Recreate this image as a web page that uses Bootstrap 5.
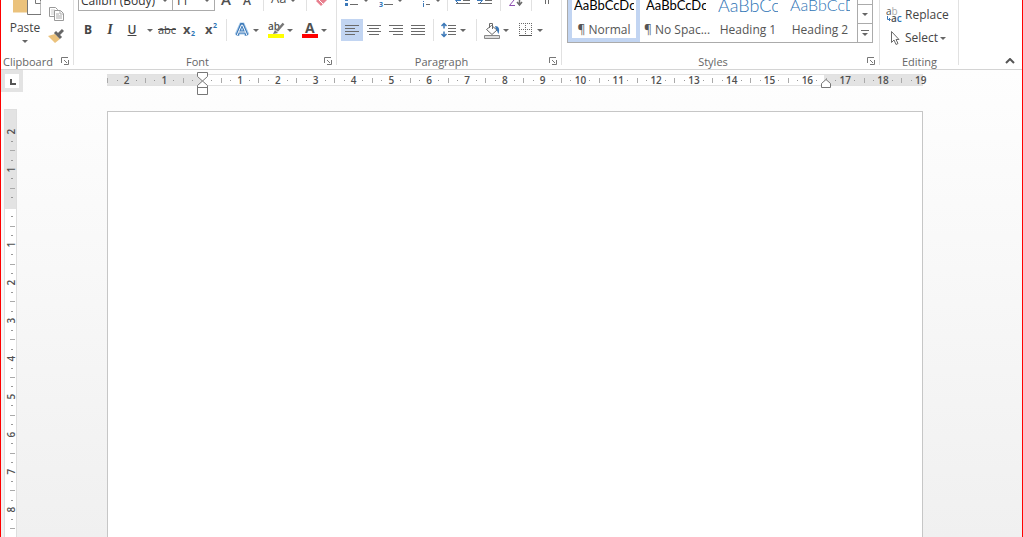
<!DOCTYPE html>
<html lang="en">
<head>
<meta charset="utf-8">
<meta name="viewport" content="width=device-width, initial-scale=1">
<title>Document editor</title>
<link href="https://cdn.jsdelivr.net/npm/bootstrap@5.3.0/dist/css/bootstrap.min.css" rel="stylesheet">
<style>
  body { font: 12px/16px "Open Sans", "Noto Sans", sans-serif; color: #444; border: solid #f00; border-width: 0 1px; overflow: hidden; }
  button, select { font: inherit; color: inherit; }
  svg { display: block; flex: none; fill: none; stroke: #6a6a6a; }
  svg text { stroke: none; fill: #505050; font-family: "Open Sans", sans-serif; }
  .ribbon { height: 70px; border-bottom: 1px solid #d4d4d4; }
  .ribbon-group { height: 69px; flex: none; position: relative; }
  .ribbon-group::after { content: ""; position: absolute; right: 0; top: 0; height: 65px; width: 1px; background: #e1e1e1; }
  .group-label { margin-top: 12px; height: 16px; color: #666; font-size: 11px; line-height: 17px; }
  .launcher { position: absolute; right: 5px; bottom: 4px; }
  .g-clipboard { width: 73px; } .g-font { width: 263px; } .g-paragraph { width: 225px; }
  .g-styles { width: 318px; } .g-editing { width: 79px; }
  .tool-row { height: 22px; padding-left: 4px; }
  .g-font .tool-row + .tool-row { padding-left: 3px; }
  .tool-row + .tool-row { margin-top: 8px; }
  .paste-btn { width: 40px; }
  .g-clipboard .group-label { margin-top: 6px; padding-left: 2px; }
  .tool { border: 0; background: none; padding: 0; height: 22px; width: 22px; display: flex; align-items: center; justify-content: center; flex: none; }
  .tool.active { background: #c2d5f2; }
  .italic-tool { font: italic bold 14px "Liberation Serif", serif; }
  .strike-tool { font-size: 11px; }
  .drop { width: 12px; justify-content: flex-start; }
  .drop.wide { width: 13px; justify-content: center; }
  .vsep { width: 1px; height: 22px; background: #e1e1e1; flex: none; margin: 0 4px; }
  .combo { appearance: none; border: 1px solid #ababab; border-radius: 0; height: 22px; padding: 1px 2px 0; color: #333; flex: none;
    background: #fff url("data:image/svg+xml,%3Csvg xmlns='http://www.w3.org/2000/svg' width='6' height='3'%3E%3Cpath d='M0 0h6L3 3z' fill='%23666'/%3E%3C/svg%3E") no-repeat right 4px center; }
  .combo-face { width: 95px; } .combo-size { width: 43px; margin-left: -1px; }
  .gallery { height: 54px; border: 1px solid #ababab; border-top: 0; margin: 0 7px 0 5px; }
  .gallery + .group-label { margin-top: 10px; }
  .style-tile { width: 72px; height: 53px; border: 4px solid transparent; background: none; padding: 2px 0 0; color: #555; white-space: nowrap; }
  .style-tile.active { border-color: #c2d5f2; }
  .sample { font-family: Lato, sans-serif; font-size: 13px; line-height: 20px; width: 60px; margin: 0 auto 7px; overflow: hidden; color: #000; text-align: left; }
  .sample.h1-look { font-size: 18px; font-weight: 300; color: #2e74b5; }
  .sample.h2-look { font-size: 16px; font-weight: 300; color: #2e74b5; }
  .gallery-nav { width: 15px; border-left: 1px solid #ababab; }
  .gallery-nav button { width: 14px; height: 19px; }
  .gallery-nav button + button { border-top: 1px solid #ababab; }
  .edit-tool { border: 0; background: none; height: 22px; margin-bottom: 1px; padding: 0 0 0 6px; display: flex; align-items: center; gap: 2px; }
  .edit-list + .group-label { margin-top: 3px; }
  .workspace { background: linear-gradient(#fefefe, #f0f0f0); min-height: 0; }
  .ruler-bar { height: 39px; }
  .tab-kind { width: 22px; height: 22px; background: #e3e3e3; padding: 4px; border: 0; flex: none; }
  .ruler-wrap { padding: 4px 15px 0 0; }
  .h-ruler { width: 816px; height: 12px; position: relative; border: solid #e1e1e1; border-width: 1px 0; background: linear-gradient(to right, #e3e3e3 95px, #fff 95px 717px, #e3e3e3 717px); }
  .scale { display: grid; font-size: 10px; line-height: 10px; font-weight: 600; color: #505050; }
  .scale > * { display: flex; align-items: center; justify-content: center; min-width: 0; min-height: 0; }
  .h-scale { width: 832px; height: 10px; margin-left: -4px; grid-template-columns: repeat(88, 1fr); }
  .h-scale .bar::before { content: ""; width: 1px; height: 5px; background: #aaa; }
  .dot::before { content: ""; width: 1px; height: 1px; background: #999; }
  .v-ruler { width: 13px; margin-left: 3px; border: solid #dedede; border-width: 1px 1px 0; background: linear-gradient(#e3e3e3 99px, #fff 99px); overflow: hidden; flex: none; padding-top: 17px; }
  .v-scale { height: 416px; width: 11px; grid-template-rows: repeat(44, 1fr); }
  .v-scale .bar::before { content: ""; height: 1px; width: 5px; background: #aaa; }
  .v-scale .dot::before { width: 2px; }
  .v-scale .bar, .v-scale .dot { padding-left: 3px; }
  .v-scale .num { writing-mode: vertical-rl; transform: rotate(180deg); }
  .marker { position: absolute; }
  .marker-left { left: 90px; top: -3px; }
  .marker-right { left: 714px; top: 4px; }
  .page-wrap { padding: 2px 9px 0 0; }
  .paper { width: 816px; background: #fff; border: 1px solid #c6c6c6; border-bottom: 0; outline: 0; }
  .collapse-btn { width: 22px; height: 16px; margin-right: 1px; }
</style>
</head>
<body class="vh-100 d-flex flex-column">

<header class="ribbon d-flex bg-white overflow-hidden flex-shrink-0">
  <section class="ribbon-group g-clipboard d-flex flex-column justify-content-end" aria-label="Clipboard">
    <div class="d-flex">
      <button class="paste-btn border-0 bg-transparent p-0 d-flex flex-column align-items-center justify-content-end ms-1">
        <svg width="32" height="16" viewBox="0 0 32 16"><path d="M4-8h14v20.500H4z" fill="#ebc27c" stroke="none"/><path d="M18.500-4.500h8l5.500 5.500v13.500h-13.500z" fill="#fff" stroke="#777"/><path d="M26.500-5v8.500h5" stroke="#777"/></svg>
        <span class="mt-1">Paste</span>
        <svg class="mt-1 mb-1" width="6" height="3"><path d="M0 0h6L3 3z" fill="#666" stroke="none"/></svg>
      </button>
      <div class="d-flex flex-column justify-content-end">
        <button class="tool" aria-label="Copy"><svg width="16" height="16"><path d="M1.500 1.500h6l2 2v7h-8z" fill="#fff" stroke="#999"/><path d="M3 4h4M3 6h4M3 8h4" stroke="#ccc"/><path d="M6.500 4.500h6l3 3v7h-9z" fill="#fff" stroke="#999"/><path d="M12 5v3h3M8 8h3M8 10h6M8 12h6" stroke="#aaa"/></svg></button>
        <button class="tool" aria-label="Format Painter"><svg width="16" height="16"><path d="M0 8l7-2 5 5-5 4z" fill="#ebc27c" stroke="none"/><path d="M7 4l6 6M10 7l5-5" stroke="#666" stroke-width="3"/></svg></button>
      </div>
    </div>
    <div class="group-label">Clipboard</div>
    <button class="launcher border-0 bg-transparent p-0" aria-label="Clipboard settings"><svg width="8" height="8"><path d="M.5 6V.5H7M3 3l3 3M7.500 3v4.500H3" stroke="#777"/></svg></button>
  </section>

  <section class="ribbon-group g-font d-flex flex-column justify-content-end" aria-label="Font">
    <div class="tool-row d-flex">
      <select class="combo combo-face" aria-label="Font"><option>Calibri (Body)</option></select>
      <select class="combo combo-size" aria-label="Font size"><option>11</option></select>
      <button class="tool" aria-label="Grow Font"><svg width="16" height="22"><text x="3" y="16" font-size="15" font-weight="600">A</text></svg></button>
      <button class="tool" aria-label="Shrink Font"><svg width="16" height="22"><text x="3" y="16" font-size="12" font-weight="600">A</text></svg></button>
      <i class="vsep"></i>
      <button class="tool" aria-label="Change Case"><svg width="20" height="22"><text x="2" y="14" font-size="13">Aa</text></svg></button>
      <button class="tool drop" aria-label="Case options"><svg width="6" height="3"><path d="M0 0h6L3 3z" fill="#666" stroke="none"/></svg></button>
      <i class="vsep"></i>
      <button class="tool" aria-label="Clear Formatting"><svg width="18" height="22"><path d="M3 12L11 4l5 5-8 8z" fill="#e8808f" stroke="none"/><path d="M5 10l6 6" stroke="#fff"/></svg></button>
    </div>
    <div class="tool-row d-flex">
      <button class="tool fw-bold" aria-label="Bold">B</button>
      <button class="tool italic-tool" aria-label="Italic">I</button>
      <button class="tool fw-semibold text-decoration-underline" aria-label="Underline">U</button>
      <button class="tool drop wide" aria-label="Underline styles"><svg width="6" height="3"><path d="M0 0h6L3 3z" fill="#666" stroke="none"/></svg></button>
      <button class="tool strike-tool text-decoration-line-through" aria-label="Strikethrough">abc</button>
      <button class="tool" aria-label="Subscript"><svg width="16" height="16"><text x="2" y="12" font-size="13" font-weight="700">x</text><text x="10" y="14" font-size="7" font-weight="700" style="fill:#2e74b5">2</text></svg></button>
      <button class="tool" aria-label="Superscript"><svg width="16" height="16"><text x="2" y="12" font-size="13" font-weight="700">x</text><text x="10" y="6" font-size="7" font-weight="700" style="fill:#2e74b5">2</text></svg></button>
      <i class="vsep"></i>
      <button class="tool" aria-label="Text Effects"><svg width="16" height="16"><path d="M3 13L7.500 3h1L13 13M5 10h6" stroke="#a9cbea" stroke-width="5"/><path d="M3 13.500L7.500 2.500h1L13 13.500M5 10h6" stroke="#3b78b8" stroke-width="3"/><path d="M3 13.500L7.500 3h1L13 13.500M5 10h6" stroke="#fff"/></svg></button>
      <button class="tool drop" aria-label="Effect options"><svg width="6" height="3"><path d="M0 0h6L3 3z" fill="#666" stroke="none"/></svg></button>
      <button class="tool" aria-label="Highlight Color"><svg width="17" height="18"><text x="0" y="9" font-size="10" font-weight="600">ab</text><path d="M15.500 2.500L9 10" stroke="#777" stroke-width="2.500"/><path d="M5 13l2-4 3 3z" fill="#777" stroke="none"/><path d="M0 13h16v4H0z" fill="#ff0" stroke="none"/></svg></button>
      <button class="tool drop" aria-label="Highlight options"><svg width="6" height="3"><path d="M0 0h6L3 3z" fill="#666" stroke="none"/></svg></button>
      <button class="tool" aria-label="Font Color"><svg width="16" height="18"><text x="3" y="12" font-size="14" font-weight="700">A</text><path d="M0 13h16v4H0z" fill="#f00" stroke="none"/></svg></button>
      <button class="tool drop" aria-label="Color options"><svg width="6" height="3"><path d="M0 0h6L3 3z" fill="#666" stroke="none"/></svg></button>
    </div>
    <div class="group-label text-center pe-3">Font</div>
    <button class="launcher border-0 bg-transparent p-0" aria-label="Font settings"><svg width="8" height="8"><path d="M.5 6V.5H7M3 3l3 3M7.500 3v4.500H3" stroke="#777"/></svg></button>
  </section>

  <section class="ribbon-group g-paragraph d-flex flex-column justify-content-end" aria-label="Paragraph">
    <div class="tool-row d-flex">
      <button class="tool" aria-label="Bullets"><svg width="14" height="22"><path d="M0 15.500h3M0 10.500h3" stroke="#3b78b8" stroke-width="3"/><path d="M5 15.500h8M5 10.500h8"/></svg></button>
      <button class="tool drop" aria-label="Bullet options"><svg width="6" height="3"><path d="M0 0h6L3 3z" fill="#666" stroke="none"/></svg></button>
      <button class="tool" aria-label="Numbering"><svg width="14" height="22"><text x="0" y="18" font-size="7" font-weight="700" style="fill:#2e74b5">3</text><path d="M5 15.500h9M5 10.500h9"/></svg></button>
      <button class="tool drop me-1" aria-label="Numbering options"><svg width="6" height="3"><path d="M0 0h6L3 3z" fill="#666" stroke="none"/></svg></button>
      <button class="tool" aria-label="Multilevel List"><svg width="14" height="22"><path d="M6.500 12v1M6.500 14v4" stroke="#3b78b8"/><path d="M9 15.500h4M4 10.500h8"/></svg></button>
      <button class="tool drop" aria-label="List options"><svg width="6" height="3"><path d="M0 0h6L3 3z" fill="#666" stroke="none"/></svg></button>
      <i class="vsep ms-0"></i>
      <button class="tool" aria-label="Decrease Indent"><svg width="16" height="22"><path d="M1 14.500h14M8 11.500h7"/><path d="M6 11.500H1M3 9l-2.500 2.500L3 14" stroke="#3b78b8"/></svg></button>
      <button class="tool" aria-label="Increase Indent"><svg width="16" height="22"><path d="M1 14.500h14M8 11.500h7"/><path d="M0 11.500h5M3 9l2.500 2.500L3 14" stroke="#3b78b8"/></svg></button>
      <i class="vsep"></i>
      <button class="tool" aria-label="Sort"><svg width="16" height="22"><path d="M6 11L1.500 16.500H7" stroke="#8e4fb0"/><path d="M11.500 4v12M9 13l2.500 3 2.500-3" stroke-width="1.500"/></svg></button>
      <i class="vsep"></i>
      <button class="tool" aria-label="Show formatting marks"><svg width="12" height="22"><path d="M4.500 6v9M7.500 6v9"/></svg></button>
    </div>
    <div class="tool-row d-flex">
      <button class="tool active" aria-label="Align Left"><svg width="14" height="12"><path d="M0 1.500h14M0 4.500h10M0 7.500h14M0 10.500h10"/></svg></button>
      <button class="tool" aria-label="Center"><svg width="14" height="12"><path d="M0 1.500h14M2 4.500h10M0 7.500h14M2 10.500h10"/></svg></button>
      <button class="tool" aria-label="Align Right"><svg width="14" height="12"><path d="M0 1.500h14M4 4.500h10M0 7.500h14M4 10.500h10"/></svg></button>
      <button class="tool" aria-label="Justify"><svg width="14" height="12"><path d="M0 1.500h14M0 4.500h14M0 7.500h14M0 10.500h14"/></svg></button>
      <i class="vsep"></i>
      <button class="tool" aria-label="Line Spacing"><svg width="16" height="16"><path d="M7 3.500h8M7 6.500h8M7 9.500h8M7 12.500h8"/><path d="M3 1v5.500M3 9.500V15M.5 4L3 1.500 5.500 4M.5 12L3 14.500 5.500 12" stroke="#3b78b8" stroke-width="1.500"/></svg></button>
      <button class="tool drop" aria-label="Spacing options"><svg width="6" height="3"><path d="M0 0h6L3 3z" fill="#666" stroke="none"/></svg></button>
      <i class="vsep"></i>
      <button class="tool" aria-label="Shading"><svg width="17" height="17"><path d="M2.500 7.500l5-4 5.500 4.500-5 4.500z" fill="#fff"/><path d="M5.500 6V1.500h3V7"/><path d="M11 4c4 0 5 3 3.500 8-1.500-2-1-4-2.500-5z" fill="#3b78b8" stroke="none"/><path d="M.5 13.500h15v3H.5z" fill="#ddd" stroke="#888"/></svg></button>
      <button class="tool drop" aria-label="Shading options"><svg width="6" height="3"><path d="M0 0h6L3 3z" fill="#666" stroke="none"/></svg></button>
      <button class="tool" aria-label="Borders"><svg width="14" height="14"><path d="M0 .5h13M0 6.500h13M.5 0v13M6.500 0v13M12.500 0v13" stroke-dasharray="1 1"/><path d="M0 12.500h13" stroke="#555"/></svg></button>
      <button class="tool drop" aria-label="Border options"><svg width="6" height="3"><path d="M0 0h6L3 3z" fill="#666" stroke="none"/></svg></button>
    </div>
    <div class="group-label text-center pe-3">Paragraph</div>
    <button class="launcher border-0 bg-transparent p-0" aria-label="Paragraph settings"><svg width="8" height="8"><path d="M.5 6V.5H7M3 3l3 3M7.500 3v4.500H3" stroke="#777"/></svg></button>
  </section>

  <section class="ribbon-group g-styles d-flex flex-column justify-content-end" aria-label="Styles">
    <div class="gallery d-flex align-items-end">
      <button class="style-tile active"><div class="sample">AaBbCcDc</div>¶ Normal</button>
      <button class="style-tile"><div class="sample">AaBbCcDc</div>¶ No Spac...</button>
      <button class="style-tile"><div class="sample h1-look">AaBbCc</div>Heading 1</button>
      <button class="style-tile"><div class="sample h2-look">AaBbCcD</div>Heading 2</button>
      <div class="gallery-nav d-flex flex-column justify-content-end ms-auto align-self-stretch">
        <button class="tool" aria-label="Scroll up"></button>
        <button class="tool" aria-label="Scroll down"><svg width="6" height="3"><path d="M0 0h6L3 3z" fill="#666" stroke="none"/></svg></button>
        <button class="tool" aria-label="More styles"><svg width="8" height="7"><path d="M0 .5h8"/><path d="M1 3h6L4 6z" fill="#666" stroke="none"/></svg></button>
      </div>
    </div>
    <div class="group-label text-center pe-3">Styles</div>
    <button class="launcher border-0 bg-transparent p-0" aria-label="Style settings"><svg width="8" height="8"><path d="M.5 6V.5H7M3 3l3 3M7.500 3v4.500H3" stroke="#777"/></svg></button>
  </section>

  <section class="ribbon-group g-editing d-flex flex-column justify-content-end" aria-label="Editing">
    <div class="edit-list">
      <button class="edit-tool"><svg width="17" height="17"><text x="0" y="8" font-size="10">a<tspan fill="#aaa">b</tspan></text><text x="5" y="15" font-size="10" font-weight="600">a<tspan fill="#2e74b5">c</tspan></text><path d="M1.500 9v3.500H4M3 11l1.500 1.500L3 14" stroke="#3b78b8"/></svg>Replace</button>
      <button class="edit-tool"><svg width="17" height="17"><path d="M5.500 1.500v11l2.500-2.500 2 4.500 2-1-2-4h3z" fill="#fff"/></svg>Select<svg width="6" height="3"><path d="M0 0h6L3 3z" fill="#666" stroke="none"/></svg></button>
    </div>
    <div class="group-label text-center">Editing</div>
  </section>

  <button class="collapse-btn border-0 bg-transparent p-0 ms-auto mt-auto d-flex align-items-center justify-content-center" aria-label="Collapse the ribbon"><svg width="10" height="6"><path d="M1 5l4-4 4 4" stroke="#555" stroke-width="2"/></svg></button>
</header>

<div class="workspace flex-grow-1 d-flex flex-column">
  <div class="ruler-bar d-flex align-items-start flex-shrink-0">
    <button class="tab-kind" aria-label="Left tab"><svg width="14" height="14"><path d="M0 0h14v14H0z" fill="#fff" stroke="none"/><path d="M6 5v5h5" stroke="#555" stroke-width="2"/></svg></button>
    <div class="ruler-wrap flex-grow-1 d-flex justify-content-center">
      <div class="h-ruler flex-shrink-0">
        <div class="scale h-scale" id="hScale"></div>
        <svg class="marker marker-left" width="11" height="24"><path d="M.5.5h10v4l-5 4.500-5-4.500zM5.500 9l5 4.500v9H.5v-9zM.5 15.500h10" fill="#fff" stroke="#777"/></svg>
        <svg class="marker marker-right" width="10" height="9"><path d="M.5 8.500V4.500l4.500-4 4.500 4v4z" fill="#fff" stroke="#777"/></svg>
      </div>
    </div>
  </div>
  <div class="d-flex flex-grow-1 overflow-hidden">
    <div class="v-ruler"><div class="scale v-scale" id="vScale"></div></div>
    <main class="page-wrap flex-grow-1 d-flex justify-content-center">
      <div class="paper flex-shrink-0" contenteditable="true" role="textbox" aria-label="Document"></div>
    </main>
  </div>
</div>

<script src="https://cdn.jsdelivr.net/npm/bootstrap@5.3.0/dist/js/bootstrap.bundle.min.js"></script>
<script>
  // Each centimetre is four columns (or rows): half mark, quarter mark, number, quarter mark.
  function fillScale(id, last, order) {
    let html = '';
    for (let cm = -2; cm <= last; cm++) {
      for (const kind of order) {
        html += kind === 'num' ? `<span class="num">${cm === 0 ? '' : Math.abs(cm)}</span>` : `<i class="${kind}"></i>`;
      }
    }
    document.getElementById(id).innerHTML = html;
  }
  fillScale('hScale', 19, ['bar', 'dot', 'num', 'dot']);
  document.getElementById('hScale').lastChild.className = '';
  fillScale('vScale', 8, ['num', 'dot', 'bar', 'dot']);
</script>
</body>
</html>
